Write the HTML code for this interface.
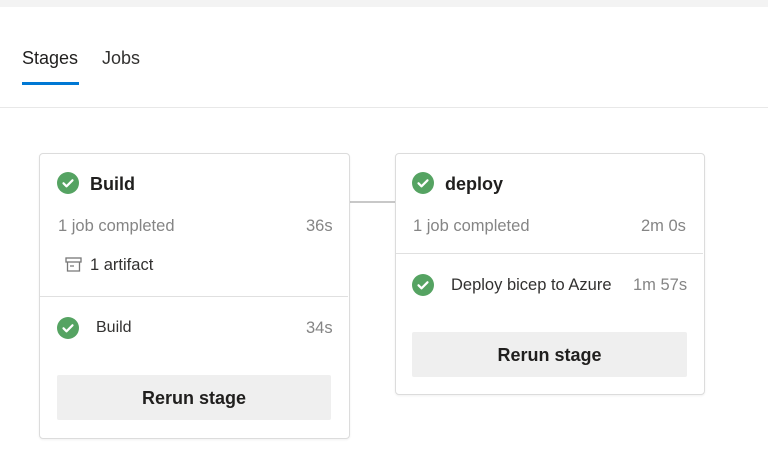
<!DOCTYPE html>
<html><head><style>
body{margin:0;width:768px;height:470px;background:#fff;font-family:"Liberation Sans",sans-serif;position:relative;overflow:hidden;color:#201f1e}
.a{position:absolute}
.card{position:absolute;border:1px solid #dcdcdc;border-radius:4px;background:#fff;box-shadow:0 1px 2px rgba(0,0,0,.06)}
.t{position:absolute;white-space:nowrap}
.g{color:#858585;font-size:16.5px}
.btn{position:absolute;background:#efefef;border-radius:2px;text-align:center;font-size:18px;font-weight:600;color:#201f1e}
</style></head><body>
<div class="a" style="left:0;top:0;width:768px;height:7px;background:#f3f3f3"></div>
<div class="t" style="left:22px;top:48px;font-size:18px;color:#201f1e">Stages</div>
<div class="t" style="left:102px;top:48px;font-size:18px;color:#323130">Jobs</div>
<div class="a" style="left:22px;top:82px;width:57px;height:3px;background:#0078d4"></div>
<div class="a" style="left:0;top:107px;width:768px;height:1px;background:#e8e8e8"></div>
<div class="a" style="left:349px;top:201px;width:46px;height:2px;background:#c8c8c8"></div>

<svg width="0" height="0" style="position:absolute"><defs><symbol id="ok" viewBox="0 0 22 22"><circle cx="11" cy="11" r="11" fill="#55a362"/><path d="M6.5 11.3l3 3 6-6" stroke="#fff" stroke-width="2.2" fill="none" stroke-linecap="round" stroke-linejoin="round"/></symbol></defs></svg>

<div class="card" style="left:39px;top:153px;width:309px;height:284px"></div>
<svg class="a" style="left:57px;top:172px" width="22" height="22"><use href="#ok"/></svg>
<div class="t" style="left:90px;top:174px;font-size:18px;font-weight:bold">Build</div>
<div class="t g" style="left:58px;top:217px">1 job completed</div>
<div class="t g" style="left:306px;top:217px">36s</div>
<svg class="a" style="left:65px;top:256px" width="17" height="17" viewBox="0 0 17 17"><rect x="1" y="2" width="15" height="4" fill="none" stroke="#777" stroke-width="1.3"/><path d="M2.5 6v9h12V6M5 10h4" fill="none" stroke="#777" stroke-width="1.3"/></svg>
<div class="t" style="left:90px;top:256px;font-size:16.5px;color:#323130">1 artifact</div>
<div class="a" style="left:40px;top:296px;width:308px;height:1px;background:#e0e0e0"></div>
<svg class="a" style="left:57px;top:317px" width="22" height="22"><use href="#ok"/></svg>
<div class="t" style="left:96px;top:319px;font-size:16px;color:#323130">Build</div>
<div class="t g" style="left:306px;top:319px">34s</div>
<div class="btn" style="left:57px;top:375px;width:274px;height:45px;line-height:47px">Rerun stage</div>

<div class="card" style="left:395px;top:153px;width:308px;height:240px"></div>
<svg class="a" style="left:412px;top:172px" width="22" height="22"><use href="#ok"/></svg>
<div class="t" style="left:445px;top:174px;font-size:18px;font-weight:600">deploy</div>
<div class="t g" style="left:413px;top:217px">1 job completed</div>
<div class="t g" style="left:641px;top:217px">2m 0s</div>
<div class="a" style="left:396px;top:253px;width:307px;height:1px;background:#e0e0e0"></div>
<svg class="a" style="left:412px;top:274px" width="22" height="22"><use href="#ok"/></svg>
<div class="t" style="left:451px;top:276px;font-size:16.5px;color:#323130">Deploy bicep to Azure</div>
<div class="t g" style="left:633px;top:276px">1m 57s</div>
<div class="btn" style="left:412px;top:332px;width:275px;height:45px;line-height:47px">Rerun stage</div>
</body></html>
